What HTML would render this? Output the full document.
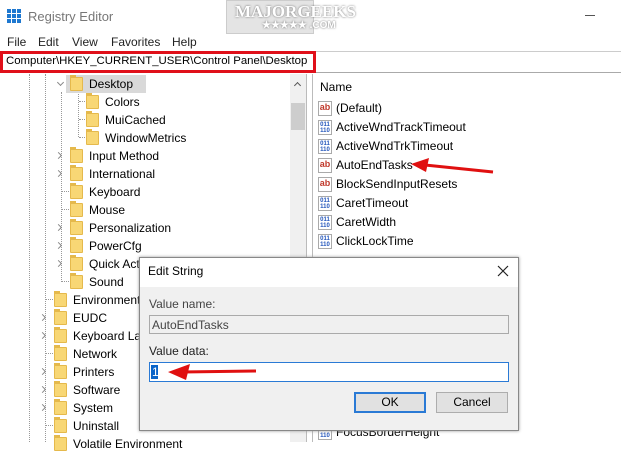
<!DOCTYPE html>
<html><head><style>
*{margin:0;padding:0;box-sizing:border-box}
body{width:621px;height:442px;overflow:hidden;background:#fff;font-family:"Liberation Sans",sans-serif;font-size:12px;color:#000;position:relative}
.a{position:absolute;white-space:nowrap}
.f{position:absolute;width:13px;height:14px;background:#f8d775;border:1px solid #e5b94c;border-radius:1px}
.f:before{content:"";position:absolute;left:-1px;top:-3px;width:6px;height:3px;background:#e5b94c}
.ch{position:absolute;width:5px;height:5px;border-right:1px solid #888;border-bottom:1px solid #888;transform:rotate(-45deg)}
.dh{position:absolute;height:0;border-top:1px dotted #999}
.dv{position:absolute;width:0;border-left:1px dotted #999}
.ab{position:absolute;width:14px;height:15px;border:1px solid #aaa;background:#fff;color:#c0392b;font-size:9px;font-weight:bold;line-height:11px;text-align:center}
.bn{position:absolute;width:14px;height:15px;border:1px solid #aaa;background:#fff;color:#2255bb;font-size:6px;font-weight:bold;line-height:6px;text-align:center;padding-top:1px}
</style></head><body>
<div class="a" style="left:7px;top:9px;width:15px;height:14px;background:repeating-linear-gradient(90deg,#1e78d0 0 4px,#fff 4px 5px)"></div>
<div class="a" style="left:7px;top:13px;width:15px;height:1px;background:#fff"></div>
<div class="a" style="left:7px;top:18px;width:15px;height:1px;background:#fff"></div>
<div class="a" style="left:28px;top:9px;font-size:13px;color:#777">Registry Editor</div>
<div class="a" style="left:226px;top:0;width:88px;height:34px;background:#e4e4e4;border:1px solid #ccc"></div>
<div class="a" style="left:235px;top:2px;font-size:17px;font-weight:bold;color:#fff;font-family:'Liberation Serif',serif;text-shadow:0 0 2px #666">MAJORGEEKS</div>
<div class="a" style="left:262px;top:20px;font-size:10px;font-weight:bold;color:#fff;text-shadow:0 0 2px #666">★★★★★ .COM</div>
<div class="a" style="left:585px;top:15px;width:10px;height:1px;background:#555"></div>
<div class="a" style="left:7px;top:35px;color:#222">File</div>
<div class="a" style="left:38px;top:35px;color:#222">Edit</div>
<div class="a" style="left:72px;top:35px;color:#222">View</div>
<div class="a" style="left:111px;top:35px;color:#222">Favorites</div>
<div class="a" style="left:172px;top:35px;color:#222">Help</div>
<div class="a" style="left:0;top:51px;width:621px;height:22px;border-top:1px solid #ccc;border-bottom:1px solid #aaa;background:#fff"></div>
<div class="a" style="left:0;top:51px;width:316px;height:22px;border:3px solid #e0101a"></div>
<div class="a" style="left:6px;top:55px;color:#000;font-size:11.4px">Computer\HKEY_CURRENT_USER\Control Panel\Desktop</div>
<div class="dv" style="left:29px;top:74px;height:368px"></div>
<div class="dv" style="left:45px;top:74px;height:368px"></div>
<div class="dv" style="left:61px;top:92px;height:190px"></div>
<div class="dv" style="left:78px;top:92px;height:45px"></div>
<div class="a" style="left:66px;top:75px;width:80px;height:18px;background:#d9d9d9"></div>
<div class="ch" style="left:58px;top:80px;transform:rotate(45deg)"></div>
<div class="f" style="left:70px;top:77px"></div><div class="a" style="left:89px;top:77px">Desktop</div>
<div class="dh" style="left:79px;top:101px;width:6px"></div><div class="f" style="left:86px;top:95px"></div><div class="a" style="left:105px;top:95px">Colors</div>
<div class="dh" style="left:79px;top:119px;width:6px"></div><div class="f" style="left:86px;top:113px"></div><div class="a" style="left:105px;top:113px">MuiCached</div>
<div class="dh" style="left:79px;top:137px;width:6px"></div><div class="f" style="left:86px;top:131px"></div><div class="a" style="left:105px;top:131px">WindowMetrics</div>
<div class="ch" style="left:56px;top:153px"></div><div class="f" style="left:70px;top:149px"></div><div class="a" style="left:89px;top:149px">Input Method</div>
<div class="ch" style="left:56px;top:171px"></div><div class="f" style="left:70px;top:167px"></div><div class="a" style="left:89px;top:167px">International</div>
<div class="dh" style="left:62px;top:191px;width:7px"></div><div class="f" style="left:70px;top:185px"></div><div class="a" style="left:89px;top:185px">Keyboard</div>
<div class="dh" style="left:62px;top:209px;width:7px"></div><div class="f" style="left:70px;top:203px"></div><div class="a" style="left:89px;top:203px">Mouse</div>
<div class="ch" style="left:56px;top:225px"></div><div class="f" style="left:70px;top:221px"></div><div class="a" style="left:89px;top:221px">Personalization</div>
<div class="ch" style="left:56px;top:243px"></div><div class="f" style="left:70px;top:239px"></div><div class="a" style="left:89px;top:239px">PowerCfg</div>
<div class="ch" style="left:56px;top:261px"></div><div class="f" style="left:70px;top:257px"></div><div class="a" style="left:89px;top:257px">Quick Act</div>
<div class="dh" style="left:62px;top:281px;width:7px"></div><div class="f" style="left:70px;top:275px"></div><div class="a" style="left:89px;top:275px">Sound</div>
<div class="dh" style="left:46px;top:299px;width:7px"></div><div class="f" style="left:54px;top:293px"></div><div class="a" style="left:73px;top:293px">Environment</div>
<div class="ch" style="left:40px;top:315px"></div><div class="f" style="left:54px;top:311px"></div><div class="a" style="left:73px;top:311px">EUDC</div>
<div class="ch" style="left:40px;top:333px"></div><div class="f" style="left:54px;top:329px"></div><div class="a" style="left:73px;top:329px">Keyboard Lay</div>
<div class="dh" style="left:46px;top:353px;width:7px"></div><div class="f" style="left:54px;top:347px"></div><div class="a" style="left:73px;top:347px">Network</div>
<div class="ch" style="left:40px;top:369px"></div><div class="f" style="left:54px;top:365px"></div><div class="a" style="left:73px;top:365px">Printers</div>
<div class="ch" style="left:40px;top:387px"></div><div class="f" style="left:54px;top:383px"></div><div class="a" style="left:73px;top:383px">Software</div>
<div class="ch" style="left:40px;top:405px"></div><div class="f" style="left:54px;top:401px"></div><div class="a" style="left:73px;top:401px">System</div>
<div class="dh" style="left:46px;top:425px;width:7px"></div><div class="f" style="left:54px;top:419px"></div><div class="a" style="left:73px;top:419px">Uninstall</div>
<div class="f" style="left:54px;top:437px"></div><div class="a" style="left:73px;top:437px">Volatile Environment</div>
<div class="a" style="left:290px;top:74px;width:16px;height:368px;background:#f0f0f0"></div>
<div class="a" style="left:291px;top:103px;width:14px;height:27px;background:#cdcdcd"></div>
<div class="ch" style="left:295px;top:83px;transform:rotate(-135deg);border-color:#555"></div>
<div class="a" style="left:306px;top:74px;width:1px;height:368px;background:#bbb"></div>
<div class="a" style="left:312px;top:74px;width:1px;height:368px;background:#bbb"></div>
<div class="a" style="left:320px;top:80px">Name</div>
<div class="ab" style="left:318px;top:101px">ab</div><div class="a" style="left:336px;top:101px">(Default)</div>
<div class="bn" style="left:318px;top:120px">011<br>110</div><div class="a" style="left:336px;top:120px">ActiveWndTrackTimeout</div>
<div class="bn" style="left:318px;top:139px">011<br>110</div><div class="a" style="left:336px;top:139px">ActiveWndTrkTimeout</div>
<div class="ab" style="left:318px;top:158px">ab</div><div class="a" style="left:336px;top:158px">AutoEndTasks</div>
<div class="ab" style="left:318px;top:177px">ab</div><div class="a" style="left:336px;top:177px">BlockSendInputResets</div>
<div class="bn" style="left:318px;top:196px">011<br>110</div><div class="a" style="left:336px;top:196px">CaretTimeout</div>
<div class="bn" style="left:318px;top:215px">011<br>110</div><div class="a" style="left:336px;top:215px">CaretWidth</div>
<div class="bn" style="left:318px;top:234px">011<br>110</div><div class="a" style="left:336px;top:234px">ClickLockTime</div>
<div class="bn" style="left:318px;top:425px">011<br>110</div><div class="a" style="left:336px;top:425px">FocusBorderHeight</div>
<svg class="a" style="left:405px;top:155px" width="90" height="25"><path d="M88 17 L20 10" stroke="#e01010" stroke-width="3"/><path d="M6 9 L24 3 L21 17 Z" fill="#e01010"/></svg>
<div class="a" style="left:139px;top:257px;width:380px;height:174px;background:#f0f0f0;border:1px solid #888;box-shadow:0 0 3px #999"></div>
<div class="a" style="left:140px;top:258px;width:378px;height:29px;background:#fff"></div>
<div class="a" style="left:148px;top:264px">Edit String</div>
<svg class="a" style="left:497px;top:265px" width="12" height="12"><path d="M1 1L11 11M11 1L1 11" stroke="#222" stroke-width="1.2"/></svg>
<div class="a" style="left:149px;top:297px;color:#444">Value name:</div>
<div class="a" style="left:149px;top:315px;width:360px;height:19px;border:1px solid #aaa;background:#f0f0f0"></div>
<div class="a" style="left:152px;top:318px;color:#444">AutoEndTasks</div>
<div class="a" style="left:149px;top:344px;color:#222">Value data:</div>
<div class="a" style="left:149px;top:362px;width:360px;height:20px;border:1px solid #2a7ad5;background:#fff"></div>
<div class="a" style="left:151px;top:365px;width:7px;height:14px;background:#0a64c8"></div>
<div class="a" style="left:152px;top:365px;color:#fff">1</div>
<svg class="a" style="left:160px;top:360px" width="100" height="25"><path d="M96 11 L22 12" stroke="#e01010" stroke-width="3"/><path d="M8 12 L30 4 L26 20 Z" fill="#e01010"/></svg>
<div class="a" style="left:354px;top:392px;width:72px;height:21px;border:2px solid #2a7ad5;background:#e1e1e1;text-align:center;line-height:17px">OK</div>
<div class="a" style="left:436px;top:392px;width:72px;height:21px;border:1px solid #adadad;background:#e1e1e1;text-align:center;line-height:19px">Cancel</div>
</body></html>
